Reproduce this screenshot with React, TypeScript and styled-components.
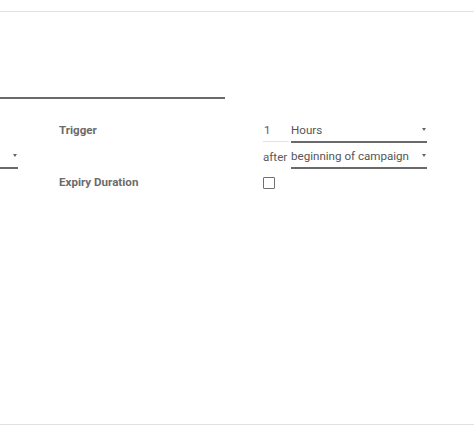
import * as React from "react";
import { createGlobalStyle, styled } from "styled-components";

const GlobalStyle = createGlobalStyle`
  html, body {
    margin: 0;
    padding: 0;
    background: #ffffff;
  }
  body {
    font-family: Roboto, "Noto Sans", "Liberation Sans", sans-serif;
    font-size: 11.6px;
    color: #555555;
  }
`;

interface SelectFieldProps {
  value: string;
}

function SelectField({ value }: SelectFieldProps) {
  return (
    <Select>
      <SelectValue>{value}</SelectValue>
      <Caret />
    </Select>
  );
}

export default function App() {
  return (
    <>
      <GlobalStyle />
      <Page>
        <Rule />
        <Form>
          <TitleField />
          <FieldGrid>
            <LeftSelectCell>
              <SelectField value="" />
            </LeftSelectCell>

            <Label $row={1}>Trigger</Label>
            <ControlRow $row={1}>
              <NumberInput>1</NumberInput>
              <SelectField value="Hours" />
            </ControlRow>

            <ControlRow $row={2}>
              <Prefix>after</Prefix>
              <SelectField value="beginning of campaign" />
            </ControlRow>

            <Label $row={3}>Expiry Duration</Label>
            <ControlRow $row={3}>
              <Checkbox role="checkbox" aria-checked="false" />
            </ControlRow>
          </FieldGrid>
        </Form>
        <BottomRule />
      </Page>
    </>
  );
}

const Page = styled.div`
  height: 439px;
  overflow: hidden;
  display: flex;
  flex-direction: column;
`;

const Rule = styled.div`
  margin-top: 11px;
  height: 1px;
  background: #e2e2e2;
  flex-shrink: 0;
`;

const BottomRule = styled(Rule)`
  margin-top: auto;
  margin-bottom: 14px;
`;

const Form = styled.div`
  margin-left: -182px;
  display: flex;
  flex-direction: column;
`;

const TitleField = styled.div`
  width: 407px;
  height: 28px;
  margin-top: 57px;
  border-bottom: 2px solid #6a6a6a;
`;

const FieldGrid = styled.div`
  margin-top: 20px;
  display: grid;
  grid-template-columns: 200px 245px 164px;
  grid-template-rows: 24px 24px 24px;
  row-gap: 2px;
`;

const LeftSelectCell = styled.div`
  grid-column: 1;
  grid-row: 2;
  display: flex;
`;

const Label = styled.div<{ $row: number }>`
  grid-column: 2;
  grid-row: ${(p) => p.$row};
  padding-left: 41px;
  margin-top: 4px;
  align-self: start;
  font-weight: 700;
  color: #6b6b6b;
  white-space: nowrap;
`;

const ControlRow = styled.div<{ $row: number }>`
  grid-column: 3;
  grid-row: ${(p) => p.$row};
  display: flex;
  align-items: stretch;
  gap: 2px;
`;

const NumberInput = styled.div`
  width: 26px;
  display: flex;
  align-items: center;
  border-bottom: 1px solid #e3e3e3;
  margin-bottom: 1px;
  color: #5a5a5a;
  padding-left: 1px;
  box-sizing: border-box;
`;

const Prefix = styled.div`
  width: 26px;
  display: flex;
  align-items: center;
  color: #5a5a5a;
  white-space: nowrap;
`;

const Select = styled.div`
  flex: 1;
  display: flex;
  align-items: center;
  border-bottom: 2px solid #6a6a6a;
  padding-right: 1px;
  min-width: 0;
`;

const SelectValue = styled.span`
  flex: 1;
  color: #555555;
  white-space: nowrap;
  overflow: hidden;
`;

const Caret = styled.span`
  width: 0;
  height: 0;
  margin-bottom: 2px;
  border-left: 2.5px solid transparent;
  border-right: 2.5px solid transparent;
  border-top: 3px solid #666666;
`;

const Checkbox = styled.span`
  align-self: center;
  width: 12px;
  height: 12px;
  box-sizing: border-box;
  border: 1.5px solid #707070;
  border-radius: 1px;
`;
